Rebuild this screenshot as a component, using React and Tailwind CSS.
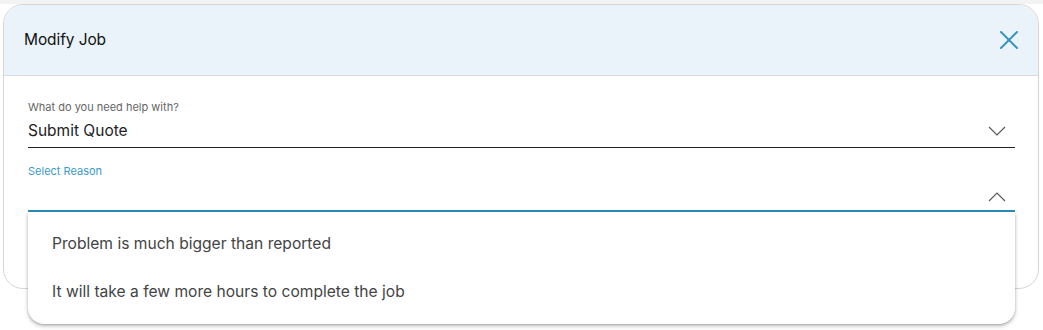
import { X } from "lucide-react";

const reasons = [
    "Problem is much bigger than reported",
    "It will take a few more hours to complete the job",
];

function Chevron({ up }) {
    return (
        <svg width="18" height="10" viewBox="0 0 18 10" fill="none" stroke="#555" strokeWidth="1.1" className="mr-[9px]">
            {up ? <polyline points="1,9 9,1 17,9" /> : <polyline points="1,1 9,9 17,1" />}
        </svg>
    );
}

export default function App() {
    return (
        <div className="w-[1043px] h-[330px] bg-white overflow-hidden font-['Inter',sans-serif]">
            <div className="h-[4px] bg-[#f3f3f3]" />
            <div className="ml-[3px] w-[1036px] h-[285px] rounded-[20px] border border-[#d6d6d6] bg-white">
                <div className="h-[71px] bg-[#e9f3f9] border-b border-[#dadada] rounded-t-[20px] flex items-center justify-between pl-[20px] pr-[13px]">
                    <h2 className="text-[15.5px] text-[#111] tracking-[-0.1px]">Modify Job</h2>
                    <X className="w-[32px] h-[32px] text-[#3a93bd]" strokeWidth={1.5} />
                </div>

                <div className="pl-[24px] pr-[23px] pt-[24px]">
                    <div className="border-b border-[#222] pb-[5px]">
                        <label className="block text-[11px] text-[#666] leading-[14px]">What do you need help with?</label>
                        <div className="flex items-center justify-between mt-[6px] h-[22px]">
                            <span className="text-[15.5px] text-[#222] leading-[20px]">Submit Quote</span>
                            <Chevron />
                        </div>
                    </div>

                    <div className="relative mt-[16px]">
                        <div className="border-b-2 border-[#2e8cb8] h-[48px]">
                            <label className="block text-[11px] text-[#3a9ac8] leading-[14px]">Select Reason</label>
                            <div className="flex justify-end mt-[14px]">
                                <Chevron up />
                            </div>
                        </div>
                        <div className="absolute left-0 right-0 top-full bg-white rounded-b-[16px] shadow-[0_2px_4px_rgba(0,0,0,0.25),0_1px_2px_rgba(0,0,0,0.15)] pt-[8px] pb-[8px]">
                            {reasons.map((r) => (
                                <div key={r} className="h-[48px] flex items-center pl-[24px] text-[15.6px] text-[#444]">
                                    {r}
                                </div>
                            ))}
                        </div>
                    </div>
                </div>
            </div>
        </div>
    );
}
